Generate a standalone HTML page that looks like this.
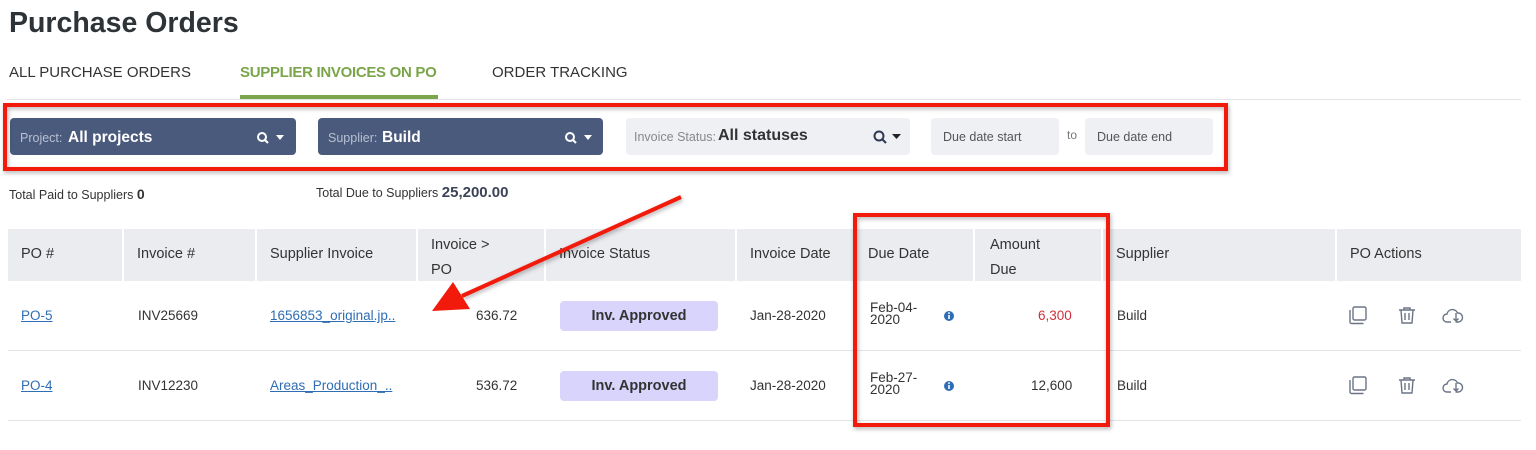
<!DOCTYPE html>
<html><head><style>
body{margin:0;width:1536px;height:450px;background:#fff;font-family:"Liberation Sans",sans-serif;color:#333;position:relative;overflow:hidden}
.a{position:absolute;white-space:nowrap}
.h{position:absolute;top:229px;height:52px;background:#ebecf0;font-size:14.5px;color:#333}
.h span{position:absolute;left:13px;top:17px}
.c{position:absolute;font-size:13.5px;color:#333}
.lnk{color:#2f6db5;text-decoration:underline}
.badge{position:absolute;width:158px;height:30px;background:#d8d4fb;border-radius:4px;font-weight:bold;font-size:14.5px;color:#333;text-align:center;line-height:30px}
.dk{position:absolute;top:118px;height:37px;background:#4a5a7c;border-radius:4px;color:#fff}
.lt{position:absolute;top:118px;height:37px;background:#eef0f4;border-radius:4px}
.line{position:absolute;left:8px;width:1513px;height:1px;background:#e3e4e8}
</style></head><body>
<div class="a" style="left:9px;top:7px;font-size:28.5px;font-weight:bold;color:#2e3338">Purchase Orders</div>
<div class="a" style="left:9px;top:64px;font-size:15px;color:#333">ALL PURCHASE ORDERS</div>
<div class="a" style="left:240px;top:64px;font-size:15px;color:#7aa54a;font-weight:bold;letter-spacing:-0.3px">SUPPLIER INVOICES ON PO</div>
<div class="a" style="left:492px;top:64px;font-size:15px;color:#333">ORDER TRACKING</div>
<div class="a" style="left:7px;top:99px;width:1514px;height:1px;background:#e3e4e8"></div>
<div class="a" style="left:240px;top:95px;width:198px;height:4px;background:#7aa54a"></div>

<div class="dk" style="left:10px;width:286px"><span class="a" style="left:10px;top:13px;font-size:12.5px;color:#b8c0d2">Project:</span><span class="a" style="left:58px;top:11px;font-size:15.5px;font-weight:bold">All projects</span></div>
<div class="dk" style="left:318px;width:285px"><span class="a" style="left:10px;top:13px;font-size:12.5px;color:#b8c0d2">Supplier:</span><span class="a" style="left:64px;top:11px;font-size:15.5px;font-weight:bold">Build</span></div>
<div class="lt" style="left:626px;width:284px"><span class="a" style="left:8px;top:12px;font-size:12.5px;color:#888">Invoice Status:</span><span class="a" style="left:92px;top:9px;font-size:16px;color:#333;font-weight:bold">All statuses</span></div>
<div class="lt" style="left:931px;width:128px"><span class="a" style="left:12px;top:12px;font-size:12.5px;color:#555">Due date start</span></div>
<div class="a" style="left:1067px;top:128px;font-size:12px;color:#777">to</div>
<div class="lt" style="left:1085px;width:128px"><span class="a" style="left:12px;top:12px;font-size:12.5px;color:#555">Due date end</span></div>
<svg class="a" style="left:0;top:0" width="1536" height="450">
<g fill="none" stroke="#fff" stroke-width="2"><circle cx="262" cy="137" r="4"/><path d="M265 140l3 3"/><circle cx="570" cy="137" r="4"/><path d="M573 140l3 3"/></g>
<path d="M276 135h8l-4 5z M584 135h8l-4 5z" fill="#fff"/>
<g fill="none" stroke="#2e3a52" stroke-width="2"><circle cx="879" cy="136" r="4.5"/><path d="M882 139l4 4"/></g>
<path d="M892 134h9l-4.5 5z" fill="#222"/>
</svg>

<div class="a" style="left:9px;top:186px;font-size:12.5px">Total Paid to Suppliers <b style="font-size:14px">0</b></div>
<div class="a" style="left:316px;top:184px;font-size:12.5px">Total Due to Suppliers <b style="font-size:15px;color:#3b4356">25,200.00</b></div>

<div class="h" style="left:8px;width:114px"><span>PO #</span></div>
<div class="h" style="left:124px;width:131px"><span>Invoice #</span></div>
<div class="h" style="left:257px;width:159px"><span>Supplier Invoice</span></div>
<div class="h" style="left:418px;width:126px"><span style="top:4px;line-height:25px">Invoice &gt;<br>PO</span></div>
<div class="h" style="left:546px;width:189px"><span>Invoice Status</span></div>
<div class="h" style="left:737px;width:116px"><span>Invoice Date</span></div>
<div class="h" style="left:855px;width:118px"><span>Due Date</span></div>
<div class="h" style="left:975px;width:126px"><span style="left:15px;top:4px;line-height:25px">Amount<br>Due</span></div>
<div class="h" style="left:1103px;width:232px"><span>Supplier</span></div>
<div class="h" style="left:1337px;width:184px"><span>PO Actions</span></div>

<div class="line" style="top:350px"></div>
<div class="line" style="top:420px"></div>

<div class="c lnk" style="left:21px;top:308px">PO-5</div>
<div class="c" style="left:138px;top:308px">INV25669</div>
<div class="c lnk" style="left:270px;top:308px">1656853_original.jp..</div>
<div class="c" style="left:476px;top:308px">636.72</div>
<div class="badge" style="left:560px;top:301px">Inv. Approved</div>
<div class="c" style="left:750px;top:308px">Jan-28-2020</div>
<div class="c" style="left:870px;top:302px;line-height:12px">Feb-04-<br>2020</div>
<div class="c" style="left:1038px;top:308px;color:#d0303a">6,300</div>
<div class="c" style="left:1117px;top:308px">Build</div>

<div class="c lnk" style="left:21px;top:378px">PO-4</div>
<div class="c" style="left:138px;top:378px">INV12230</div>
<div class="c lnk" style="left:270px;top:378px">Areas_Production_..</div>
<div class="c" style="left:476px;top:378px">536.72</div>
<div class="badge" style="left:560px;top:371px">Inv. Approved</div>
<div class="c" style="left:750px;top:378px">Jan-28-2020</div>
<div class="c" style="left:870px;top:372px;line-height:12px">Feb-27-<br>2020</div>
<div class="c" style="left:1031px;top:378px">12,600</div>
<div class="c" style="left:1117px;top:378px">Build</div>

<svg class="a" style="left:0;top:0" width="1536" height="450">
<g fill="#2f6db5"><circle cx="949" cy="316" r="5"/><circle cx="949" cy="386" r="5"/></g>
<g fill="#fff"><rect x="948.2" y="315" width="1.6" height="4"/><rect x="948.2" y="312.3" width="1.6" height="1.6"/><rect x="948.2" y="385" width="1.6" height="4"/><rect x="948.2" y="382.3" width="1.6" height="1.6"/></g>
<g fill="none" stroke="#6b7486" stroke-width="1.4">
<g id="ic"><rect x="1353" y="307" width="13" height="13" rx="1.5"/><path d="M1350 310v12a1.5 1.5 0 0 0 1.5 1.5h12"/>
<path d="M1399 310h16M1404 310v-2h6v2M1401 310l1 13h10l1-13M1405 313v7M1409 313v7"/>
<path d="M1451 322h-4a4 4 0 0 1 0-8 5.5 5.5 0 0 1 10.5-1 4 4 0 0 1 1 9h-3M1456 313v8M1453.5 318.5l2.5 2.5 2.5-2.5"/></g>
<use href="#ic" y="70"/>
</g>
<g fill="none" stroke="#f21a0a" stroke-width="4" filter="drop-shadow(1px 2px 2px rgba(0,0,0,.3))">
<rect x="5" y="105" width="1221" height="64"/>
<rect x="855" y="215" width="253" height="210"/>
<path d="M681 197L462 296"/>
</g>
<path d="M432 311L453 282L470 309Z" fill="#f21a0a"/>
</svg>
</body></html>
